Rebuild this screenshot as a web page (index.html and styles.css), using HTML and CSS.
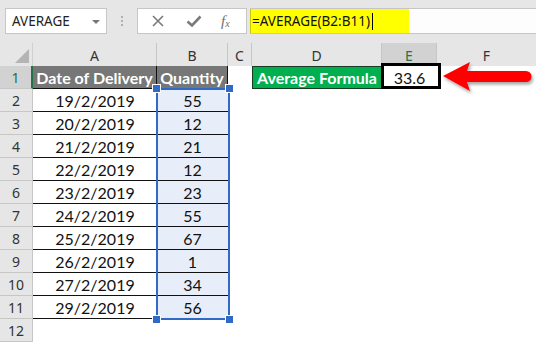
FILE: index.html
```html
<!DOCTYPE html>
<html>
<head>
<meta charset="utf-8">
<link rel="stylesheet" href="styles.css">
</head>
<body>
<div class="toolbar">
  <div class="namebox"><span>AVERAGE</span><span class="dd"></span></div>
  <div class="grip"><i></i><i></i><i></i></div>
  <div class="fxbtns">
    <svg class="btn" width="14" height="14" viewBox="0 0 14 14"><path d="M2 2 L12 12 M12 2 L2 12" stroke="#7a7a7a" stroke-width="1.6"/></svg>
    <svg class="btn" width="16" height="14" viewBox="0 0 16 14"><path d="M1.5 7.5 L6 11.5 L14.5 2.5" stroke="#7a7a7a" stroke-width="2.6" fill="none"/></svg>
    <span class="fx">f<sub>x</sub></span>
  </div>
  <div class="formula"><span class="hl">=AVERAGE(B2:B11)<i class="caret"></i></span></div>
</div>
<div class="sheet">
  <div class="corner"><span class="tri"></span></div>
  <div class="ch">A</div>
  <div class="ch">B</div>
  <div class="ch">C</div>
  <div class="ch">D</div>
  <div class="ch sel">E</div>
  <div class="ch last">F</div>

  <div class="rh sel">1</div>
  <div class="c hd">Date of Delivery</div>
  <div class="c hd">Quantity</div>
  <div class="c"></div>
  <div class="c green">Average Formula</div>
  <div class="c num">33.6</div>
  <div class="c"></div>

  <div class="rh">2</div><div class="c d">19/2/2019</div><div class="c q">55</div><div class="c"></div><div class="c"></div><div class="c"></div><div class="c"></div>
  <div class="rh">3</div><div class="c d">20/2/2019</div><div class="c q">12</div><div class="c"></div><div class="c"></div><div class="c"></div><div class="c"></div>
  <div class="rh">4</div><div class="c d">21/2/2019</div><div class="c q">21</div><div class="c"></div><div class="c"></div><div class="c"></div><div class="c"></div>
  <div class="rh">5</div><div class="c d">22/2/2019</div><div class="c q">12</div><div class="c"></div><div class="c"></div><div class="c"></div><div class="c"></div>
  <div class="rh">6</div><div class="c d">23/2/2019</div><div class="c q">23</div><div class="c"></div><div class="c"></div><div class="c"></div><div class="c"></div>
  <div class="rh">7</div><div class="c d">24/2/2019</div><div class="c q">55</div><div class="c"></div><div class="c"></div><div class="c"></div><div class="c"></div>
  <div class="rh">8</div><div class="c d">25/2/2019</div><div class="c q">67</div><div class="c"></div><div class="c"></div><div class="c"></div><div class="c"></div>
  <div class="rh">9</div><div class="c d">26/2/2019</div><div class="c q">1</div><div class="c"></div><div class="c"></div><div class="c"></div><div class="c"></div>
  <div class="rh">10</div><div class="c d">27/2/2019</div><div class="c q">34</div><div class="c"></div><div class="c"></div><div class="c"></div><div class="c"></div>
  <div class="rh">11</div><div class="c d">29/2/2019</div><div class="c q">56</div><div class="c"></div><div class="c"></div><div class="c"></div><div class="c"></div>
  <div class="rh">12</div><div class="c"></div><div class="c"></div><div class="c"></div><div class="c"></div><div class="c"></div><div class="c"></div>

  <div class="selection">
    <span class="h tl"></span><span class="h tr"></span><span class="h bl"></span><span class="h br"></span>
  </div>
  <div class="active"></div>
  <svg class="arrow" width="100" height="40" viewBox="0 0 100 40">
    <defs>
      <filter id="sh" x="-20%" y="-30%" width="150%" height="170%">
        <feDropShadow dx="1.5" dy="2.5" stdDeviation="1.5" flood-color="#000" flood-opacity="0.35"/>
      </filter>
    </defs>
    <path d="M3 16 L30 2 L27 11 L86 11 A5.5 5.5 0 0 1 86 22 L27 22 L30 31 Z" fill="#ff0000" filter="url(#sh)"/>
  </svg>
</div>
</body>
</html>
```

FILE: styles.css
```css
* { box-sizing: border-box; }
html, body { margin: 0; padding: 0; }
body {
  width: 536px;
  height: 344px;
  overflow: hidden;
  background: #fff;
  font-family: "Noto Sans", "Liberation Sans", sans-serif;
}
.toolbar {
  height: 43px;
  background: #e6e6e6;
  display: flex;
  align-items: flex-start;
  padding-top: 8px;
  padding-left: 5px;
}
.namebox {
  width: 102px;
  height: 26px;
  background: #fff;
  border: 1px solid #c6c6c6;
  display: flex;
  align-items: center;
  justify-content: space-between;
  padding: 0 6px 0 6px;
  font-size: 13.5px;
  color: #222;
}
.namebox .dd {
  width: 0; height: 0;
  border-left: 4px solid transparent;
  border-right: 4px solid transparent;
  border-top: 4px solid #777;
  margin-top: 1px;
}
.grip {
  width: 30px;
  height: 26px;
  display: flex;
  flex-direction: column;
  align-items: center;
  justify-content: center;
  gap: 2px;
}
.grip i {
  display: block;
  width: 2px; height: 2px;
  background: #b0b0b0;
}
.fxbtns {
  width: 110px;
  height: 26px;
  background: #fff;
  border: 1px solid #c6c6c6;
  display: flex;
  align-items: center;
  padding-left: 13px;
  gap: 21px;
}
.fx {
  font-family: "Liberation Serif", serif;
  font-style: italic;
  font-size: 15px;
  color: #6f6f6f;
  line-height: 1;
  margin-left: -2px;
}
.fx sub { font-size: 10px; vertical-align: -1px; }
.formula {
  margin-left: 3px;
  flex: 1;
  height: 26px;
  background: #fdfdfd;
  border-top: 1px solid #c6c6c6;
  border-bottom: 1px solid #c6c6c6;
  display: flex;
}
.formula .hl {
  width: 159px;
  background: #ffff00;
  border-left: 1px solid #c8c800;
  display: flex;
  align-items: center;
  padding-left: 1px;
  font-size: 13.5px;
  color: #111;
}
.caret {
  display: inline-block;
  width: 1px;
  height: 17px;
  background: #000;
  margin-left: 2px;
}
.sheet {
  position: relative;
  display: grid;
  grid-template-columns: 33px 124px 71px 24px 130px 55px 99px;
  grid-template-rows: repeat(13, 23px);
  font-family: Lato, "Liberation Sans", sans-serif;
  font-size: 16px;
}
.corner {
  background: #e6e6e6;
  border-right: 1px solid #d0d0d0;
  position: relative;
}
.tri {
  position: absolute;
  right: 3px;
  bottom: 3px;
  width: 0; height: 0;
  border-left: 14px solid transparent;
  border-bottom: 14px solid #b4b4b4;
}
.ch {
  background: #e6e6e6;
  border-right: 1px solid #c6c6c6;
  display: flex;
  align-items: center;
  justify-content: center;
  font-family: "Noto Sans", sans-serif;
  font-size: 14px;
  color: #333;
  padding-top: 2px;
}
.ch.sel { background: #d2d2d2; color: #217346; }
.ch.last { border-right: none; }
.rh {
  background: #e6e6e6;
  border-bottom: 1px solid #c6c6c6;
  border-right: 1px solid #c6c6c6;
  display: flex;
  align-items: center;
  justify-content: center;
  font-family: "Noto Sans", sans-serif;
  font-size: 14px;
  color: #333;
}
.rh.sel {
  background: #d2d2d2;
  color: #217346;
  border-right: 2px solid #217346;
}
.c {
  background: #fff;
  display: flex;
  align-items: center;
  justify-content: center;
  color: #111;
  white-space: nowrap;
}
.c.hd {
  background: #777;
  color: #fff;
  font-weight: 700;
  border-bottom: 1px solid #111;
  border-right: 1px solid #111;
}
.c.d {
  border-bottom: 1px solid #111;
  padding-top: 1px;
}
.c.q {
  background: #e7eef9;
  border-bottom: 1px solid #111;
  padding-top: 1px;
}
.c.green {
  background: #00b050;
  color: #fff;
  font-weight: 700;
  border: 1px solid #1b3a24;
  justify-content: flex-start;
  padding-left: 4px;
}
.c.num { padding-top: 0; }
.selection {
  position: absolute;
  left: 156px;
  top: 45px;
  width: 74px;
  height: 232px;
  border: 2px solid #3169c6;
}
.h {
  position: absolute;
  width: 7px;
  height: 7px;
  background: #3169c6;
  outline: 1px solid #fff;
}
.h.tl { left: -5px; top: -5px; }
.h.tr { right: -5px; top: -5px; }
.h.bl { left: -5px; bottom: -5px; }
.h.br { right: -5px; bottom: -5px; }
.active {
  position: absolute;
  left: 381px;
  top: 20px;
  width: 60px;
  height: 26px;
  border: 3px solid #000;
}
.arrow {
  position: absolute;
  left: 440px;
  top: 17px;
}
```
